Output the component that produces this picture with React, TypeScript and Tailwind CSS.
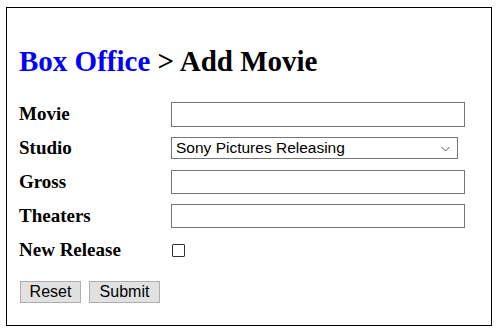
import React from 'react';

const serif = { fontFamily: '"Liberation Serif", "Times New Roman", serif' };

const Row: React.FC<{ label: string; children: React.ReactNode }> = ({ label, children }) => (
    <div className="flex items-center h-[34px]">
        <label className="w-[152px] shrink-0 text-[19px] font-bold text-black">{label}</label>
        {children}
    </div>
);

const App: React.FC = () => {
    return (
        <div className="pt-[7px] pl-[6px] bg-white" style={serif}>
            <div className="w-[486px] h-[319px] border border-black px-[12px]">
                <h1 className="mt-[37px] text-[29px] leading-[32px] font-bold text-black">
                    <span className="text-[#0000ff]">Box Office</span> &gt; Add Movie
                </h1>

                <form className="mt-[20px] font-['Liberation_Sans',Arial,sans-serif]">
                    <div style={serif}>
                        <Row label="Movie">
                            <input type="text" className="w-[294px] h-[25px] border border-[#767676] bg-white px-1 text-[15px]" />
                        </Row>
                        <Row label="Studio">
                            <div className="relative w-[287px] h-[22px] border border-[#767676] bg-white flex items-center pl-[4px] text-[15.5px] text-black font-['Liberation_Sans',Arial,sans-serif]">
                                Sony Pictures Releasing
                                <svg className="absolute right-[7px] top-[8px]" width="9" height="6" viewBox="0 0 9 6" fill="none">
                                    <path d="M0.5 1 L4.5 5 L8.5 1" stroke="#555" strokeWidth="1" />
                                </svg>
                            </div>
                        </Row>
                        <Row label="Gross">
                            <input type="text" className="w-[294px] h-[24px] border border-[#767676] bg-white px-1 text-[15px]" />
                        </Row>
                        <Row label="Theaters">
                            <input type="text" className="w-[294px] h-[24px] border border-[#767676] bg-white px-1 text-[15px]" />
                        </Row>
                        <Row label="New Release">
                            <div className="ml-[1px] w-[13px] h-[13px] border border-[#333] bg-white rounded-[1px]" />
                        </Row>
                    </div>

                    <div className="flex gap-[8px] mt-[14px] ml-[1px] font-['Liberation_Sans',Arial,sans-serif]">
                        <button type="button" className="w-[61px] h-[22px] bg-[#e1e1e1] border border-[#adadad] text-[16px] text-black leading-none">
                            Reset
                        </button>
                        <button type="button" className="w-[71px] h-[22px] bg-[#e1e1e1] border border-[#adadad] text-[16px] text-black leading-none">
                            Submit
                        </button>
                    </div>
                </form>
            </div>
        </div>
    );
};

export default App;
